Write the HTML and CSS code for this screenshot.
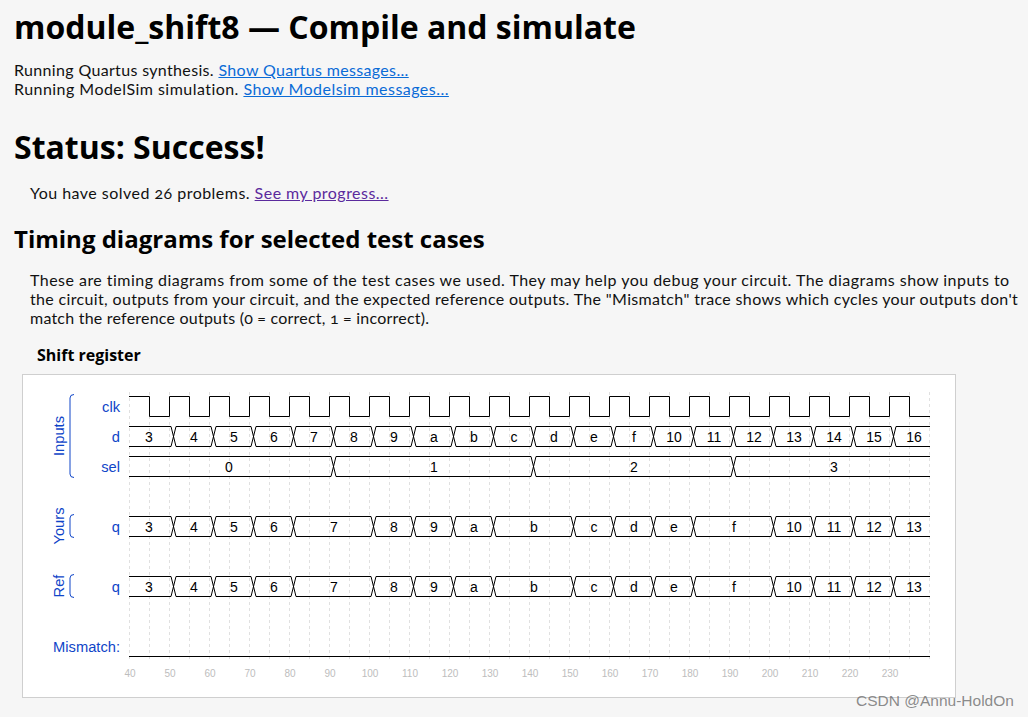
FILE: index.html
```html
<!DOCTYPE html>
<html lang="en">
<head>
<meta charset="utf-8">
<title>module_shift8 — Compile and simulate</title>
<link rel="stylesheet" href="styles.css">
</head>
<body>
<main class="page">
  <h1 class="title">module_shift8 — Compile and simulate</h1>
  <p class="log"><span class="line log-a">Running Quartus synthesis. <a class="link" href="#q">Show Quartus messages...</a></span><span class="line log-b">Running ModelSim simulation. <a class="link" href="#m">Show Modelsim messages...</a></span></p>
  <h2 class="status">Status: Success!</h2>
  <p class="indented solved">You have solved 26 problems. <a class="link visited" href="#p">See my progress...</a></p>
  <h3 class="section">Timing diagrams for selected test cases</h3>
  <p class="indented explain"><span class="line ex-a">These are timing diagrams from some of the test cases we used. They may help you debug your circuit. The diagrams show inputs to</span><span class="line ex-b">the circuit, outputs from your circuit, and the expected reference outputs. The "Mismatch" trace shows which cycles your outputs don't</span><span class="line ex-c">match the reference outputs (0 = correct, 1 = incorrect).</span></p>
  <h4 class="case">Shift register</h4>
  <figure class="panel">
    <svg class="wave" width="932" height="322" viewBox="23 375 932 322" xmlns="http://www.w3.org/2000/svg">
      <g class="grid">
        <path d="M129.5 392V661M149.5 392V661M169.5 392V661M189.5 392V661M209.5 392V661M229.5 392V661M249.5 392V661M269.5 392V661M289.5 392V661M309.5 392V661M329.5 392V661M349.5 392V661M369.5 392V661M389.5 392V661M409.5 392V661M429.5 392V661M449.5 392V661M469.5 392V661M489.5 392V661M509.5 392V661M529.5 392V661M549.5 392V661M569.5 392V661M589.5 392V661M609.5 392V661M629.5 392V661M649.5 392V661M669.5 392V661M689.5 392V661M709.5 392V661M729.5 392V661M749.5 392V661M769.5 392V661M789.5 392V661M809.5 392V661M829.5 392V661M849.5 392V661M869.5 392V661M889.5 392V661M909.5 392V661M929.5 392V661"/>
      </g>
      <g class="sig">
        <path d="M129 396.5H149.5V416.5H169.5V396.5H189.5V416.5H209.5V396.5H229.5V416.5H249.5V396.5H269.5V416.5H289.5V396.5H309.5V416.5H329.5V396.5H349.5V416.5H369.5V396.5H389.5V416.5H409.5V396.5H429.5V416.5H449.5V396.5H469.5V416.5H489.5V396.5H509.5V416.5H529.5V396.5H549.5V416.5H569.5V396.5H589.5V416.5H609.5V396.5H629.5V416.5H649.5V396.5H669.5V416.5H689.5V396.5H709.5V416.5H729.5V396.5H749.5V416.5H769.5V396.5H789.5V416.5H809.5V396.5H829.5V416.5H849.5V396.5H869.5V416.5H889.5V396.5H909.5V416.5H930"/>
        <!-- d bus -->
        <path d="M129 426.5H171L176 446.5H211L216 426.5H251L256 446.5H291L296 426.5H331L336 446.5H371L376 426.5H411L416 446.5H451L456 426.5H491L496 446.5H531L536 426.5H571L576 446.5H611L616 426.5H651L656 446.5H691L696 426.5H731L736 446.5H771L776 426.5H811L816 446.5H851L856 426.5H891L896 446.5H930"/>
        <path d="M129 446.5H171L176 426.5H211L216 446.5H251L256 426.5H291L296 446.5H331L336 426.5H371L376 446.5H411L416 426.5H451L456 446.5H491L496 426.5H531L536 446.5H571L576 426.5H611L616 446.5H651L656 426.5H691L696 446.5H731L736 426.5H771L776 446.5H811L816 426.5H851L856 446.5H891L896 426.5H930"/>
        <!-- sel bus -->
        <path d="M129 456.5H331L336 476.5H531L536 456.5H731L736 476.5H930"/>
        <path d="M129 476.5H331L336 456.5H531L536 476.5H731L736 456.5H930"/>
        <!-- q, yours -->
        <path d="M129 516.5H171L176 536.5H211L216 516.5H251L256 536.5H291L296 516.5H371L376 536.5H411L416 516.5H451L456 536.5H491L496 516.5H571L576 536.5H611L616 516.5H651L656 536.5H691L696 516.5H771L776 536.5H811L816 516.5H851L856 536.5H891L896 516.5H930"/>
        <path d="M129 536.5H171L176 516.5H211L216 536.5H251L256 516.5H291L296 536.5H371L376 516.5H411L416 536.5H451L456 516.5H491L496 536.5H571L576 516.5H611L616 536.5H651L656 516.5H691L696 536.5H771L776 516.5H811L816 536.5H851L856 516.5H891L896 536.5H930"/>
        <!-- q, ref -->
        <path d="M129 576.5H171L176 596.5H211L216 576.5H251L256 596.5H291L296 576.5H371L376 596.5H411L416 576.5H451L456 596.5H491L496 576.5H571L576 596.5H611L616 576.5H651L656 596.5H691L696 576.5H771L776 596.5H811L816 576.5H851L856 596.5H891L896 576.5H930"/>
        <path d="M129 596.5H171L176 576.5H211L216 596.5H251L256 576.5H291L296 596.5H371L376 576.5H411L416 596.5H451L456 576.5H491L496 596.5H571L576 576.5H611L616 596.5H651L656 576.5H691L696 596.5H771L776 576.5H811L816 596.5H851L856 576.5H891L896 596.5H930"/>
        <path d="M129 656.5H930"/>
      </g>
      <g class="val">
        <text x="149" y="442">3</text><text x="194" y="442">4</text><text x="234" y="442">5</text><text x="274" y="442">6</text><text x="314" y="442">7</text><text x="354" y="442">8</text><text x="394" y="442">9</text><text x="434" y="442">a</text><text x="474" y="442">b</text><text x="514" y="442">c</text><text x="554" y="442">d</text><text x="594" y="442">e</text><text x="634" y="442">f</text><text x="674" y="442">10</text><text x="714" y="442">11</text><text x="754" y="442">12</text><text x="794" y="442">13</text><text x="834" y="442">14</text><text x="874" y="442">15</text><text x="914" y="442">16</text>
        <text x="229" y="472">0</text><text x="434" y="472">1</text><text x="634" y="472">2</text><text x="834" y="472">3</text>
        <text x="149" y="532">3</text><text x="194" y="532">4</text><text x="234" y="532">5</text><text x="274" y="532">6</text><text x="334" y="532">7</text><text x="394" y="532">8</text><text x="434" y="532">9</text><text x="474" y="532">a</text><text x="534" y="532">b</text><text x="594" y="532">c</text><text x="634" y="532">d</text><text x="674" y="532">e</text><text x="734" y="532">f</text><text x="794" y="532">10</text><text x="834" y="532">11</text><text x="874" y="532">12</text><text x="914" y="532">13</text>
        <text x="149" y="592">3</text><text x="194" y="592">4</text><text x="234" y="592">5</text><text x="274" y="592">6</text><text x="334" y="592">7</text><text x="394" y="592">8</text><text x="434" y="592">9</text><text x="474" y="592">a</text><text x="534" y="592">b</text><text x="594" y="592">c</text><text x="634" y="592">d</text><text x="674" y="592">e</text><text x="734" y="592">f</text><text x="794" y="592">10</text><text x="834" y="592">11</text><text x="874" y="592">12</text><text x="914" y="592">13</text>
      </g>
      <g class="name">
        <text x="120" y="412">clk</text><text x="120" y="442">d</text><text x="120" y="472">sel</text><text x="120" y="532">q</text><text x="120" y="592">q</text><text x="120" y="652">Mismatch:</text>
      </g>
      <g class="group">
        <text transform="translate(64 436) rotate(-90)">Inputs</text>
        <text transform="translate(64 526) rotate(-90)">Yours</text>
        <text transform="translate(64 586) rotate(-90)">Ref</text>
      </g>
      <g class="bracket">
        <path d="M74 394.5Q70 394.5 70 398V474Q70 477.5 74 477.5"/>
        <path d="M74 514.5Q70 514.5 70 518V534Q70 537.5 74 537.5"/>
        <path d="M74 574.5Q70 574.5 70 578V594Q70 597.5 74 597.5"/>
      </g>
      <g class="axis">
        <text x="130" y="677">40</text><text x="170" y="677">50</text><text x="210" y="677">60</text><text x="250" y="677">70</text><text x="290" y="677">80</text><text x="330" y="677">90</text><text x="370" y="677">100</text><text x="410" y="677">110</text><text x="450" y="677">120</text><text x="490" y="677">130</text><text x="530" y="677">140</text><text x="570" y="677">150</text><text x="610" y="677">160</text><text x="650" y="677">170</text><text x="690" y="677">180</text><text x="730" y="677">190</text><text x="770" y="677">200</text><text x="810" y="677">210</text><text x="850" y="677">220</text><text x="890" y="677">230</text>
      </g>
    </svg>
  </figure>
</main>
<div class="watermark">CSDN @Annu-HoldOn</div>
</body>
</html>
```
FILE: styles.css
```css
html, body {
  margin: 0;
  padding: 0;
  height: 717px;
  overflow: hidden;
  background: #f6f6f6;
}
body {
  position: relative;
  font-family: Lato, "Open Sans", sans-serif;
  font-size: 16px;
  line-height: 19px;
  color: #111;
}
.page {
  padding: 0 0 0 14px;
}
.title, .status, .section, .case {
  margin: 0;
  font-family: "Open Sans", sans-serif;
  font-weight: 700;
  color: #000;
}
.title {
  font-size: 32px;
  line-height: 44px;
  padding-top: 5px;
}
.log {
  margin: 11px 0 0;
}
.line {
  display: block;
}
.log-a {
  letter-spacing: 0.34px;
}
.log-b {
  letter-spacing: 0.46px;
}
.status {
  font-size: 32px;
  line-height: 44px;
  margin-top: 27px;
}
.indented {
  margin: 0;
  padding-left: 16px;
  font-variant-numeric: oldstyle-nums;
  white-space: nowrap;
}
.solved {
  margin-top: 14px;
  letter-spacing: 0.47px;
}
.section {
  font-size: 24px;
  line-height: 32px;
  margin-top: 21px;
}
.explain {
  margin-top: 15px;
}
.ex-a {
  letter-spacing: 0.47px;
}
.ex-b {
  letter-spacing: 0.34px;
}
.ex-c {
  letter-spacing: 0.22px;
}
.case {
  font-size: 16px;
  line-height: 22px;
  margin-top: 17px;
  padding-left: 23px;
}
.link {
  color: #0a6bd6;
  text-decoration: underline;
}
.link.visited {
  color: #5b2a9d;
}
.panel {
  margin: 8px 0 0 8px;
  width: 932px;
  height: 322px;
  background: #fff;
  border: 1px solid #cfcfcf;
}
.wave {
  display: block;
  font-family: "Liberation Sans", Arial, sans-serif;
}
.grid path {
  fill: none;
  stroke: #e0e0e0;
  stroke-width: 1;
  stroke-dasharray: 3 3;
}
.sig path {
  fill: none;
  stroke: #000;
  stroke-width: 1;
}
.val text {
  font-size: 14px;
  fill: #000;
  text-anchor: middle;
}
.name text {
  font-size: 14.7px;
  fill: #0f45c8;
  text-anchor: end;
}
.group text {
  font-size: 14.7px;
  fill: #0f45c8;
  text-anchor: middle;
}
.bracket path {
  fill: none;
  stroke: #0f45c8;
  stroke-width: 1;
}
.axis text {
  font-size: 10px;
  fill: #bdbdbd;
  text-anchor: middle;
}
.watermark {
  position: absolute;
  left: 856px;
  top: 692px;
  font-family: "Liberation Sans", Arial, sans-serif;
  font-size: 15.5px;
  line-height: 18px;
  color: rgba(110, 110, 110, 0.8);
  white-space: nowrap;
}
```
